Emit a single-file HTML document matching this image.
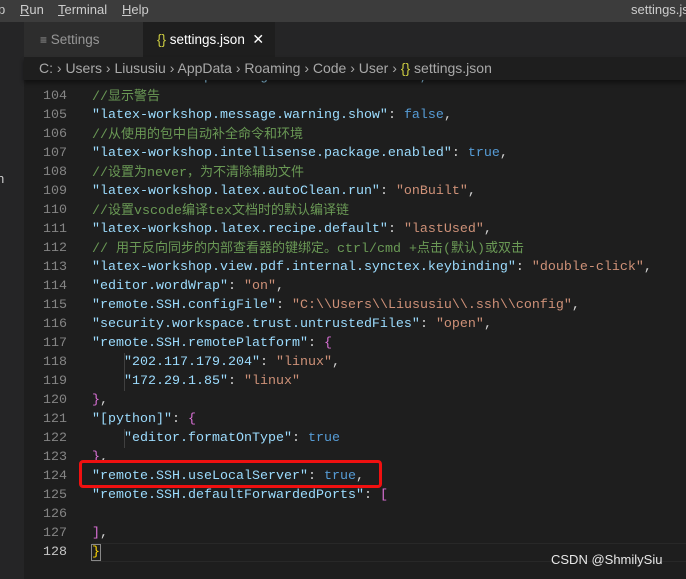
<!DOCTYPE html>
<html><head><meta charset="utf-8"><style>
*{margin:0;padding:0;box-sizing:border-box}
body{width:686px;height:579px;overflow:hidden;background:#1e1e1e;position:relative;font-family:"Liberation Sans","Noto Sans CJK SC",sans-serif}
.menu{position:absolute;left:0;top:0;width:686px;height:22px;background:#3c3c3c;color:#ccc;font-size:13px;line-height:19px}
.menu span{position:absolute;top:0}
.menu u{text-decoration:underline}
.side{position:absolute;left:0;top:22px;width:24px;height:557px;background:#252526}
.tabs{position:absolute;left:24px;top:22px;width:662px;height:35px;background:#252526}
.tab{position:absolute;top:0;height:35px;line-height:35px;font-size:13.5px}
.bc{position:absolute;left:24px;top:57px;width:662px;height:23px;background:#1e1e1e;color:#a9a9a9;font-size:14px;line-height:23px;padding-left:15px;z-index:3;box-shadow:0 3px 4px rgba(0,0,0,.45)}
.code{position:absolute;left:24px;top:68px;width:662px;height:511px;font-family:"Liberation Mono","Noto Sans CJK SC",monospace;font-size:13.33px;line-height:19px;white-space:pre}
.ln{position:absolute;left:0;width:43px;text-align:right;color:#858585}
.tx{position:absolute;left:68px}
.k{color:#9cdcfe}.s{color:#ce9178}.c{color:#6a9955}.b{color:#569cd6}.p{color:#d4d4d4}.m{color:#da70d6}.y{color:#ffd700}
.cn{font-size:13px}
</style></head><body>
<div class="menu"><span style="left:-2px">p</span><span style="left:20px"><u>R</u>un</span><span style="left:58px"><u>T</u>erminal</span><span style="left:122px"><u>H</u>elp</span><span style="left:631px">settings.json</span></div>
<div class="side"><span style="position:absolute;left:-3px;top:149px;color:#ccc;font-size:13px">n</span></div>
<div class="tabs">
<div class="tab" style="left:0;width:119px;background:#2d2d2d;color:#969696;padding-left:16px"><span style="font-size:12px">&#8801;</span> Settings</div>
<div class="tab" style="left:119px;width:132px;background:#1e1e1e;color:#fff;padding-left:14px"><span style="color:#cbcb41">{}</span> settings.json &nbsp;<span style="font-size:14px">✕</span></div>
</div>
<div class="bc">C: › Users › Liususiu › AppData › Roaming › Code › User › <span style="color:#cbcb41">{}</span> settings.json</div>
<div style="position:absolute;left:92px;top:543px;width:594px;height:19px;border-top:1px solid #282828;border-bottom:1px solid #282828"></div>
<div style="position:absolute;left:124px;top:353px;width:1px;height:38px;background:#404040"></div>
<div style="position:absolute;left:124px;top:429px;width:1px;height:19px;background:#404040"></div>
<div class="code">
<div class="ln" style="top:0">103</div><div class="tx k" style="top:0">"latex-workshop.message.error.show": true,</div>
<div class="ln" style="top:19px">104</div><div class="tx c" style="top:19px">//<span class="cn">显示警告</span></div>
<div class="ln" style="top:38px">105</div><div class="tx" style="top:38px"><span class="k">"latex-workshop.message.warning.show"</span><span class="p">: </span><span class="b">false</span><span class="p">,</span></div>
<div class="ln" style="top:57px">106</div><div class="tx c" style="top:57px">//<span class="cn">从使用的包中自动补全命令和环境</span></div>
<div class="ln" style="top:76px">107</div><div class="tx" style="top:76px"><span class="k">"latex-workshop.intellisense.package.enabled"</span><span class="p">: </span><span class="b">true</span><span class="p">,</span></div>
<div class="ln" style="top:95px">108</div><div class="tx c" style="top:95px">//<span class="cn">设置为</span>never<span class="cn">，为不清除辅助文件</span></div>
<div class="ln" style="top:114px">109</div><div class="tx" style="top:114px"><span class="k">"latex-workshop.latex.autoClean.run"</span><span class="p">: </span><span class="s">"onBuilt"</span><span class="p">,</span></div>
<div class="ln" style="top:133px">110</div><div class="tx c" style="top:133px">//<span class="cn">设置</span>vscode<span class="cn">编译</span>tex<span class="cn">文档时的默认编译链</span></div>
<div class="ln" style="top:152px">111</div><div class="tx" style="top:152px"><span class="k">"latex-workshop.latex.recipe.default"</span><span class="p">: </span><span class="s">"lastUsed"</span><span class="p">,</span></div>
<div class="ln" style="top:171px">112</div><div class="tx c" style="top:171px">// <span class="cn">用于反向同步的内部查看器的键绑定。</span>ctrl/cmd +<span class="cn">点击</span>(<span class="cn">默认</span>)<span class="cn">或双击</span></div>
<div class="ln" style="top:190px">113</div><div class="tx" style="top:190px"><span class="k">"latex-workshop.view.pdf.internal.synctex.keybinding"</span><span class="p">: </span><span class="s">"double-click"</span><span class="p">,</span></div>
<div class="ln" style="top:209px">114</div><div class="tx" style="top:209px"><span class="k">"editor.wordWrap"</span><span class="p">: </span><span class="s">"on"</span><span class="p">,</span></div>
<div class="ln" style="top:228px">115</div><div class="tx" style="top:228px"><span class="k">"remote.SSH.configFile"</span><span class="p">: </span><span class="s">"C:\\Users\\Liususiu\\.ssh\\config"</span><span class="p">,</span></div>
<div class="ln" style="top:247px">116</div><div class="tx" style="top:247px"><span class="k">"security.workspace.trust.untrustedFiles"</span><span class="p">: </span><span class="s">"open"</span><span class="p">,</span></div>
<div class="ln" style="top:266px">117</div><div class="tx" style="top:266px"><span class="k">"remote.SSH.remotePlatform"</span><span class="p">: </span><span class="m">{</span></div>
<div class="ln" style="top:285px">118</div><div class="tx" style="top:285px">    <span class="k">"202.117.179.204"</span><span class="p">: </span><span class="s">"linux"</span><span class="p">,</span></div>
<div class="ln" style="top:304px">119</div><div class="tx" style="top:304px">    <span class="k">"172.29.1.85"</span><span class="p">: </span><span class="s">"linux"</span></div>
<div class="ln" style="top:323px">120</div><div class="tx" style="top:323px"><span class="m">}</span><span class="p">,</span></div>
<div class="ln" style="top:342px">121</div><div class="tx" style="top:342px"><span class="k">"[python]"</span><span class="p">: </span><span class="m">{</span></div>
<div class="ln" style="top:361px">122</div><div class="tx" style="top:361px">    <span class="k">"editor.formatOnType"</span><span class="p">: </span><span class="b">true</span></div>
<div class="ln" style="top:380px">123</div><div class="tx" style="top:380px"><span class="m">}</span><span class="p">,</span></div>
<div class="ln" style="top:399px">124</div><div class="tx" style="top:399px"><span class="k">"remote.SSH.useLocalServer"</span><span class="p">: </span><span class="b">true</span><span class="p">,</span></div>
<div class="ln" style="top:418px">125</div><div class="tx" style="top:418px"><span class="k">"remote.SSH.defaultForwardedPorts"</span><span class="p">: </span><span class="m">[</span></div>
<div class="ln" style="top:437px">126</div>
<div class="ln" style="top:456px">127</div><div class="tx" style="top:456px"><span class="m">]</span><span class="p">,</span></div>
<div class="ln" style="top:475px;color:#c6c6c6">128</div><div class="tx" style="top:475px"><span class="y" style="outline:1px solid #888">}</span></div>
</div>
<div style="position:absolute;left:79px;top:460px;width:303px;height:28px;border:3px solid #f01010;border-radius:4px;z-index:4"></div>
<div style="position:absolute;left:551px;top:552px;color:#e8e8e8;font-size:13px;font-family:'Liberation Sans',sans-serif">CSDN @ShmilySiu</div>
</body></html>
